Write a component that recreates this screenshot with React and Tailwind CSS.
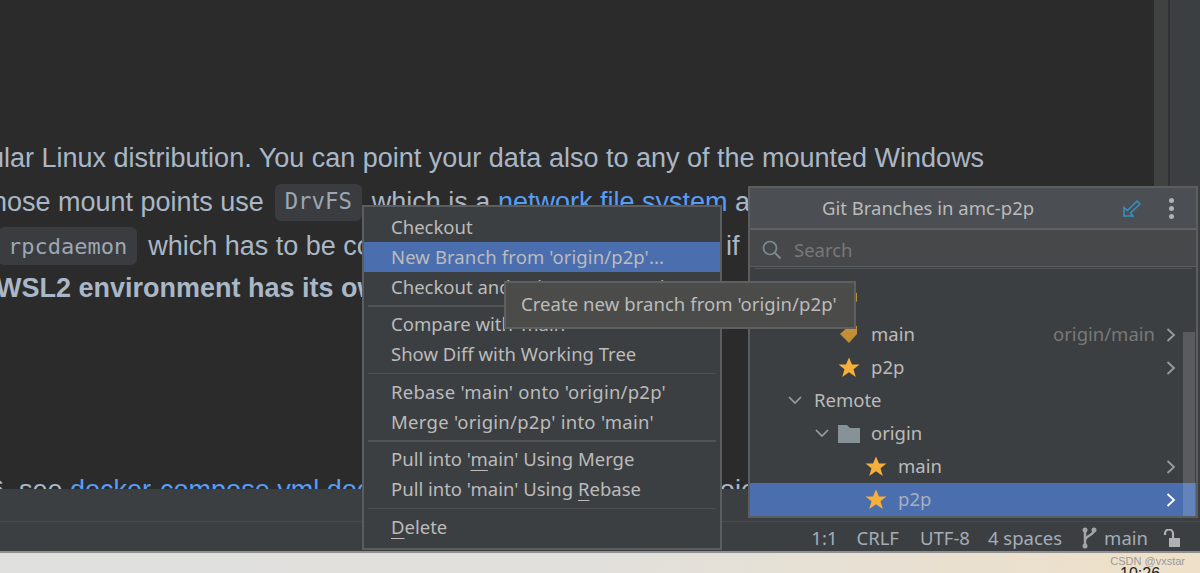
import React from 'react';

const Star = () => (
  <svg width="22" height="21" viewBox="0 0 22 21" className="shrink-0">
    <path d="M11 0.500l3 7h7.500l-6 4.800 2.300 7.700L11 15.300 4.200 20l2.300-7.700-6-4.800H8z" fill="#f5b03c" />
  </svg>
);

const Tag = () => (
  <svg width="22" height="21" viewBox="0 0 22 21" className="shrink-0">
    <path d="M11 2h8v8l-8 9-9-9z" fill="#c08f38" />
  </svg>
);

const ChevronRight = ({ color = '#9a9da0' }) => (
  <svg width="10" height="14" viewBox="0 0 10 14" className="shrink-0">
    <path d="M1.500 1l6.500 6-6.500 6" fill="none" stroke={color} strokeWidth="1.800" />
  </svg>
);

const ChevronDown = () => (
  <svg width="14" height="9" viewBox="0 0 14 9" className="shrink-0">
    <path d="M1 1l6 6 6-6" fill="none" stroke="#9a9da0" strokeWidth="1.700" />
  </svg>
);

const Folder = () => (
  <svg width="22" height="18" viewBox="0 0 22 18" className="shrink-0">
    <path d="M0 0h9l3 3h10v15H0z" fill="#869298" />
  </svg>
);

const menuGroups = [
  { sep: 'h-[2px] mt-[3px] mb-[2px] bg-[#515355]', items: [
    'Checkout',
    <span className="tracking-[0.1px]">New Branch from 'origin/p2p'...</span>,
    "Checkout and Rebase onto 'main'",
  ] },
  { sep: 'h-px mt-[4px] mb-[3px] bg-[#4d5052]', items: ["Compare with 'main'", 'Show Diff with Working Tree'] },
  { sep: 'h-[2px] mt-[3px] mb-[2px] bg-[#515355]', items: [
    <span className="tracking-[0.23px]">Rebase 'main' onto 'origin/p2p'</span>,
    <span className="tracking-[0.27px]">Merge 'origin/p2p' into 'main'</span>,
  ] },
  { sep: 'h-px mt-[4px] mb-[3px] bg-[#4d5052]', items: [
    <span>Pull into '<u className="underline-offset-4">m</u>ain' Using Merge</span>,
    <span>Pull into 'main' Using <u className="underline-offset-4">R</u>ebase</span>,
  ] },
  { items: [<span><u className="underline-offset-4">D</u>elete</span>] },
];

const ContextMenu = () => (
  <div className="absolute left-[362px] top-[205px] w-[360px] h-[345px] bg-[#3c3f41] border-2 border-[#5b5d5f] pt-[5px] text-[18.5px] text-[#bbbbbb]">
    {menuGroups.map((group, i) => (
      <div key={i}>
        {group.items.map((item, j) => (
          <div key={j} className={`h-[30px] pl-[27px] flex items-center whitespace-nowrap ${i === 0 && j === 1 ? 'bg-[#4b6eaf]' : ''}`}>
            {item}
          </div>
        ))}
        {group.sep && <div className={`mx-[4px] ${group.sep}`} />}
      </div>
    ))}
  </div>
);

const Row = ({ indent, icon, label, right, arrow, selected, expandClass }) => (
  <div className={`h-[33px] flex items-center pr-[20px] ${selected ? 'bg-[#4b6eaf]' : ''}`} style={{ paddingLeft: indent }}>
    {expandClass && <span className={`${expandClass} shrink-0`}><ChevronDown /></span>}
    {icon && <span className="w-[33px] shrink-0">{icon}</span>}
    <span className={`-mt-[2px] ${selected ? 'text-[#a9afbb]' : 'text-[#bbbbbb]'}`}>{label}</span>
    <span className="-mt-[2px] ml-auto text-[#787878]">{right}</span>
    {arrow && <span className="ml-[11px]"><ChevronRight color={selected ? '#ffffff' : '#9a9da0'} /></span>}
  </div>
);

const BranchesPopup = () => (
  <div className="absolute left-[748px] top-[186px] w-[450px] h-[332px] bg-[#3c3f41] border-2 border-[#5b5d5f] text-[18.5px] flex flex-col">
    <div className="h-[42px] shrink-0 bg-[#4b4e52] border-b-2 border-[#5f6163] flex items-center pl-[72px] pr-[22px] text-[#bbbbbb]">
      <span>Git Branches in amc-p2p</span>
      <svg width="18" height="18" viewBox="0 0 18 18" className="ml-auto mr-[28px]">
        <path d="M1 17V8.500L4.500 11.500L14 2L17 5L7.500 14L10 17Z" fill="none" stroke="#3592c4" strokeWidth="1.500" />
      </svg>
      <div className="flex flex-col gap-[3px]">
        <span className="w-[5px] h-[5px] rounded-full bg-[#afb1b3]" />
        <span className="w-[5px] h-[5px] rounded-full bg-[#afb1b3]" />
        <span className="w-[5px] h-[5px] rounded-full bg-[#afb1b3]" />
      </div>
    </div>
    <div className="h-[37px] shrink-0 bg-[#46484a] border-b border-[#5b5d5f] flex items-center pl-[12px] pt-[3px] text-[#787878]">
      <svg width="20" height="20" viewBox="0 0 20 20" className="mr-[12px]">
        <circle cx="8" cy="8" r="6.500" fill="none" stroke="#7f8b91" strokeWidth="1.700" />
        <path d="M13 13l5.500 5.500" stroke="#7f8b91" strokeWidth="2" />
      </svg>
      Search
    </div>
    <div className="mx-[4px] mt-px h-px shrink-0 bg-[#505355]" />
    <div className="relative pt-[16px]">
      <Row indent={88} icon={<Tag />} />
      <Row indent={88} icon={<Tag />} label="main" right="origin/main" arrow />
      <Row indent={88} icon={<Star />} label="p2p" arrow />
      <Row indent={38} expandClass="w-[26px]" label="Remote" />
      <Row indent={65} expandClass="w-[23px]" icon={<Folder />} label="origin" />
      <Row indent={115} icon={<Star />} label="main" arrow />
      <Row indent={115} icon={<Star />} label="p2p" arrow selected />
      <div className="absolute right-[1px] top-[63px] bottom-0 w-[12px] bg-[#ffffff]/15" />
    </div>
  </div>
);

const Tooltip = () => (
  <div className="absolute left-[504px] top-[281px] w-[352px] h-[48px] bg-[#4b4c4a] border-2 border-[#5d5f60] flex items-center pl-[15px] pb-[2px] text-[18.5px] tracking-[0.06px] text-[#bbbbbb] whitespace-nowrap">
    Create new branch from 'origin/p2p'
  </div>
);

const StatusBar = () => (
  <div className="h-[30px] shrink-0 bg-[#3c3f41] border-t border-[#484a4c] flex items-center justify-end pr-[20px] pt-[2px] text-[18.5px] text-[#a4adb8]">
    <span className="mr-[19px]">1:1</span>
    <span className="mr-[21px]">CRLF</span>
    <span className="mr-[18px]">UTF-8</span>
    <span className="mr-[19px]">4 spaces</span>
    <svg width="16" height="22" viewBox="0 0 16 22" className="mr-[7px]">
      <circle cx="4" cy="3" r="2.500" fill="#a2a4a6" />
      <circle cx="4" cy="19" r="2.500" fill="#a2a4a6" />
      <circle cx="13" cy="3" r="2.500" fill="#a2a4a6" />
      <path d="M4 3v16M13 3c0 6-9 5-9 11" fill="none" stroke="#a2a4a6" strokeWidth="2.500" />
    </svg>
    <span className="mr-[15px]">main</span>
    <svg width="17" height="18" viewBox="0 0 17 18">
      <path d="M2 6V4.500a4 4 0 0 1 8 0V9" fill="none" stroke="#afb1b3" strokeWidth="2.200" />
      <rect x="6" y="9" width="11" height="9" fill="#afb1b3" />
    </svg>
  </div>
);

export default function App() {
  return (
    <div className="relative w-[1200px] h-[573px] overflow-hidden flex flex-col font-['Noto_Sans',sans-serif]">
      <div className="h-[551px] shrink-0 flex flex-col">
        <div className="flex-1 flex min-h-0">
          <div className="w-[1154px] shrink-0 bg-[#2b2b2b] overflow-hidden pt-[136px] font-['Liberation_Sans',sans-serif] text-[27px] text-[#a9b7c6] whitespace-nowrap">
            <div className="h-[44px] leading-[44px] -ml-[11px]">ular Linux distribution. You can point your data also to any of the mounted Windows</div>
            <div className="h-[44px] flex items-center -ml-[8px]">
              <span>hose mount points use</span>
              <span className="ml-[11px] mr-[11px] h-[37px] px-[10px] flex items-center rounded-md bg-[#3a3c3f] font-['DejaVu_Sans_Mono',monospace] text-[22.3px] text-[#9da7b2]">DrvFS</span>
              <span className="-ml-px">which is a <span className="text-[#589df6]">network file system</span> and, additionally,</span>
            </div>
            <div className="h-[44px] flex items-center">
              <span className="-ml-[2px] mr-[11px] h-[38px] pl-[10px] pr-[10px] flex items-center rounded-md bg-[#3a3c3f] font-['DejaVu_Sans_Mono',monospace] text-[22px] text-[#9da7b2]">rpcdaemon</span>
              <span>which has to be configured as Remote DB even if it is executed</span>
            </div>
            <div className="h-[44px] leading-[44px] -mt-[2px] -ml-[4px] font-bold">WSL2 environment has its own IP address</div>
            <div className="mt-[158px] h-[44px] leading-[44px] -ml-[11px]">
              6, see <span className="text-[#589df6]">docker-compose.yml docs</span> for a proper set-up of the project
            </div>
          </div>
          <div className="w-[14px] shrink-0 bg-[#3f4240]" />
          <div className="w-[2px] shrink-0 bg-[#323232]" />
          <div className="flex-1 bg-[#3c3f41]" />
        </div>
        <div className="h-[32px] shrink-0 bg-[#3c3f41]" />
        <StatusBar />
      </div>
      <div className="flex-1 border-t-2 border-[#8f8f8f] bg-linear-to-r from-[#e0e0de] via-[#e2e0dc] via-50% to-[#efe0c8] relative">
        <div className="absolute right-[15px] top-[1px] font-['Liberation_Sans',sans-serif] text-[11px] text-[#9a9a9a] leading-[14px]">CSDN @vxstar</div>
        <div className="absolute left-[1120px] top-[12px] font-['Liberation_Sans',sans-serif] text-[16px] text-[#222222] leading-[18px]">10:26</div>
      </div>
      <ContextMenu />
      <BranchesPopup />
      <Tooltip />
    </div>
  );
}
